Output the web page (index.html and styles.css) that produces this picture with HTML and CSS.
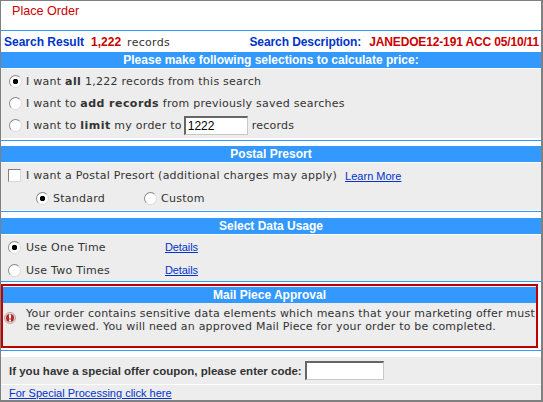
FILE: index.html
```html
<!DOCTYPE html>
<html lang="en">
<head>
    <meta charset="UTF-8">
    <title>Place Order</title>
    <link rel="stylesheet" href="styles.css">
</head>
<body>
    <div class="order-box">
        <h1 class="page-title">Place Order</h1>

        <!-- Search summary -->
        <div class="summary">
            <span><b class="label">Search Result</b><b class="red count">1,222</b><span class="records">records</span></span>
            <span><b class="label desc-label">Search Description:</b><b class="red desc">JANEDOE12-191 ACC 05/10/11</b></span>
        </div>

        <!-- Selections -->
        <h2 class="bar">Please make following selections to calculate price:</h2>
        <div class="panel selections">
            <label class="opt"><input type="radio" name="sel" checked><span>I want <b>all</b> 1,222 records from this search</span></label>
            <label class="opt"><input type="radio" name="sel"><span>I want to <b>add records</b> from previously saved searches</span></label>
            <label class="opt"><input type="radio" name="sel"><span>I want to <b>limit</b> my order to</span><input class="text-input limit" type="text" value="1222"><span>records</span></label>
        </div>

        <!-- Postal presort -->
        <div class="section-gap first-gap"></div>
        <h2 class="bar">Postal Presort</h2>
        <div class="panel presort">
            <label class="opt"><input class="check" type="checkbox"><span>I want a Postal Presort (additional charges may apply)</span><a class="learn" href="#">Learn More</a></label>
            <div class="presort-types">
                <label class="opt standard"><input type="radio" name="type" checked><span>Standard</span></label>
                <label class="opt"><input type="radio" name="type"><span>Custom</span></label>
            </div>
        </div>

        <!-- Data usage -->
        <div class="section-gap"></div>
        <h2 class="bar">Select Data Usage</h2>
        <div class="panel usage">
            <div class="usage-row">
                <label class="opt usage-opt"><input type="radio" name="usage" checked><span>Use One Time</span></label>
                <a href="#">Details</a>
            </div>
            <div class="usage-row">
                <label class="opt usage-opt"><input type="radio" name="usage"><span>Use Two Times</span></label>
                <a href="#">Details</a>
            </div>
        </div>

        <!-- Mail piece warning -->
        <div class="approval">
            <h2 class="bar">Mail Piece Approval</h2>
            <div class="approval-body">
                <svg class="alert-icon" width="12" height="12" viewBox="0 0 12 12">
                    <circle cx="6" cy="6" r="5.5" fill="#e6d6d6" stroke="#b8a8a8"/>
                    <circle cx="6" cy="6" r="4" fill="#b52a2a"/>
                    <rect x="5" y="2.5" width="2" height="4" fill="#fff"/>
                    <rect x="5" y="7.5" width="2" height="2" fill="#fff"/>
                </svg>
                <p>Your order contains sensitive data elements which means that your marketing offer must be reviewed. You will need an approved Mail Piece for your order to be completed.</p>
            </div>
        </div>

        <div class="section-gap lined"></div>
        <div class="coupon">
            <b>If you have a special offer coupon, please enter code:</b>
            <input class="text-input code" type="text">
        </div>
        <div class="special"><a href="#">For Special Processing click here</a></div>
    </div>
</body>
</html>
```

FILE: styles.css
```css
/* General Reset */
* {
    box-sizing: border-box;
    margin: 0;
    padding: 0;
}

body {
    font-family: "DejaVu Sans", Verdana, sans-serif;
    font-size: 11px;
    letter-spacing: 0.25px;
    color: #333;
    background-color: #fff;
}

a {
    font-family: "Liberation Sans", Arial, sans-serif;
    font-size: 11px;
    letter-spacing: 0;
    color: #0033cc;
}

/* Outer box */
.order-box {
    width: 543px;
    height: 402px;
    border: 1px solid #808080;
    border-right-width: 2px;
    border-bottom-width: 2px;
    background-color: #fff;
    overflow: hidden;
}

.page-title {
    height: 30px;
    padding: 3px 0 0 11px;
    font-family: "Liberation Sans", Arial, sans-serif;
    font-size: 12.6px;
    font-weight: normal;
    letter-spacing: 0;
    color: #cc0000;
    border-bottom: 1px solid #3399ff;
}

/* Search summary */
.summary {
    height: 21px;
    padding: 0 2px 0 3px;
    display: flex;
    justify-content: space-between;
    align-items: center;
    font-family: "Liberation Sans", Arial, sans-serif;
    font-size: 12px;
    letter-spacing: 0;
}

.label {
    color: #0033cc;
}

.desc-label {
    letter-spacing: -0.08px;
}

.red {
    color: #cc0000;
}

.count {
    margin-left: 7px;
}

.desc {
    margin-left: 8px;
    letter-spacing: -0.15px;
}

.records {
    margin-left: 6px;
    font-family: "DejaVu Sans", Verdana, sans-serif;
    font-size: 11px;
    letter-spacing: 0.3px;
}

/* Section bars */
.bar {
    height: 16px;
    background-color: #3399ff;
    color: #fff;
    font-family: "Liberation Sans", Arial, sans-serif;
    font-size: 12px;
    font-weight: bold;
    letter-spacing: 0;
    line-height: 17px;
    text-align: center;
}

.panel {
    background-color: #ededed;
    border-top: 1px solid #fff;
}

.section-gap {
    height: 7px;
    border-top: 1px solid #3399ff;
    background-color: #fff;
}

.first-gap {
    height: 6px;
}

.opt {
    display: flex;
    align-items: center;
}

.opt b {
    letter-spacing: 0.45px;
}

.opt input[type="radio"] {
    appearance: none;
    width: 13px;
    height: 13px;
    margin-right: 4px;
    flex: none;
    border-radius: 50%;
    background-color: #fff;
    border: 1px solid #8a8a8a;
    border-right-color: #dcdcdc;
    border-bottom-color: #dcdcdc;
}

.opt input[type="radio"]:checked {
    background: radial-gradient(circle, #000 0 2.5px, #fff 3px);
}

.opt .check {
    appearance: none;
    width: 13px;
    height: 13px;
    margin-right: 5px;
    flex: none;
    background-color: #fff;
    border: 1px solid #808080;
    border-right-color: #d8d8d8;
    border-bottom-color: #d8d8d8;
}

.text-input {
    height: 19px;
    font-family: "Liberation Sans", Arial, sans-serif;
    font-size: 12px;
    color: #000;
    padding-left: 2px;
    background-color: #fff;
    border: 2px solid #666;
    border-right-color: #c8c8c8;
    border-bottom-color: #c8c8c8;
    border-right-width: 1px;
    border-bottom-width: 1px;
}

/* Selections */
.selections {
    height: 72px;
    padding: 1px 0 0 8px;
    display: flex;
    flex-direction: column;
    border-bottom: 2px solid #fff;
}

.selections .opt {
    height: 22px;
}

.limit {
    width: 64px;
    margin: 0 4px 0 2px;
}

/* Presort */
.presort {
    height: 49px;
    padding: 1px 0 0 7px;
    border-bottom: 1px solid #fff;
}

.presort .opt {
    height: 23px;
}

.learn {
    margin-left: 8px;
}

.presort-types {
    display: flex;
    padding-left: 28px;
}

.standard {
    width: 108px;
}

/* Usage */
.usage {
    height: 48px;
    padding: 1px 0 0 7px;
    border-bottom: 1px solid #3399ff;
}

.usage-row {
    height: 23px;
    display: flex;
    align-items: center;
}

.usage-row a {
    margin-bottom: 2px;
    letter-spacing: -0.1px;
}

.usage-opt {
    width: 157px;
}

.usage-opt input[type="radio"] {
    margin-right: 5px;
}

/* Approval */
.approval {
    height: 64px;
    border: 2px solid #bf0000;
    margin-top: 2px;
    margin-right: 3px;
    background-color: #ededed;
}

.approval .bar {
    margin-top: 1px;
}

.approval-body {
    display: flex;
    align-items: center;
    height: 43px;
    padding-bottom: 10px;
}

.alert-icon {
    flex: none;
    margin: 0 10px 3px 1px;
}

.approval-body p {
    width: 511px;
    flex: none;
    line-height: 13px;
    letter-spacing: 0.2px;
}

.lined {
    height: 7px;
    margin-top: 2px;
}

/* Coupon */
.coupon {
    height: 28px;
    padding-left: 8px;
    display: flex;
    align-items: center;
    gap: 3px;
    background-color: #ededed;
    font-family: "Liberation Sans", Arial, sans-serif;
    font-size: 11.5px;
    letter-spacing: 0;
    border-bottom: 1px solid #fff;
}

.code {
    width: 79px;
}

.special {
    height: 15px;
    padding: 2px 0 0 8px;
    background-color: #ededed;
}
```
